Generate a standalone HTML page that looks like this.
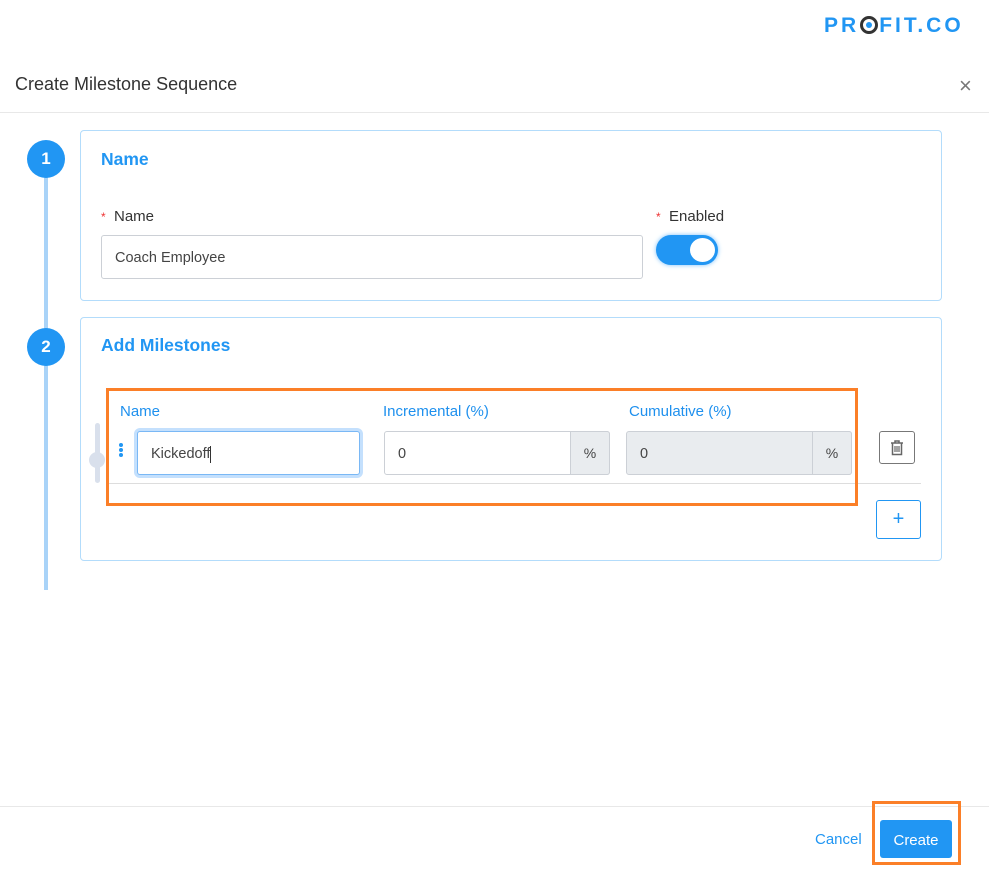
<!DOCTYPE html>
<html><head><meta charset="utf-8"><style>
*{box-sizing:border-box;margin:0;padding:0}
body{width:989px;height:870px;background:#fff;font-family:"Liberation Sans",sans-serif;position:relative;overflow:hidden;color:#333}
.a{position:absolute}
.blue{color:#2196f3}
.inp{position:absolute;border:1px solid #ccd0d6;border-radius:3px;background:#fff;font-size:14.5px;color:#444;padding-left:13px;padding-top:2px;display:flex;align-items:center}
.lbl{position:absolute;font-size:15px;color:#1e90ee}
.add{position:absolute;top:-1px;bottom:-1px;right:-1px;width:40px;border:1px solid #ccd0d6;border-radius:0 3px 3px 0;background:#e9ecef;display:flex;align-items:center;justify-content:center;font-size:14px;color:#444}
</style></head><body>
<div class="a blue" style="left:824px;top:14px;font-size:21px;font-weight:bold;letter-spacing:3px;">PR<span style="display:inline-block;width:18px;height:18px;border:3px solid #333;border-radius:50%;vertical-align:-2px;position:relative;margin:0 1px"><span style="position:absolute;left:3px;top:3px;width:6px;height:6px;background:#2196f3;border-radius:50%"></span></span>FIT.CO</div>
<div class="a" style="left:15px;top:74px;font-size:18px;color:#333">Create Milestone Sequence</div>
<div class="a" style="left:959px;top:73px;font-size:22px;color:#777">×</div>
<div class="a" style="left:0;top:112px;width:989px;height:1px;background:#e8e8e8"></div>

<div class="a" style="left:44px;top:170px;width:4px;height:420px;background:#a9d3f8"></div>
<div class="a" style="left:27px;top:140px;width:38px;height:38px;border-radius:50%;background:#2196f3;color:#fff;font-weight:bold;font-size:17px;display:flex;align-items:center;justify-content:center">1</div>
<div class="a" style="left:27px;top:328px;width:38px;height:38px;border-radius:50%;background:#2196f3;color:#fff;font-weight:bold;font-size:17px;display:flex;align-items:center;justify-content:center">2</div>

<div class="a" style="left:80px;top:130px;width:862px;height:171px;border:1px solid #b3dcfb;border-radius:4px"></div>
<div class="a blue" style="left:101px;top:149px;font-size:17.5px;font-weight:bold">Name</div>
<div class="a" style="left:101px;top:208px;font-size:15px"><span style="color:#e33;font-size:12px">*</span>&nbsp; Name</div>
<div class="inp" style="left:101px;top:235px;width:542px;height:44px">Coach Employee</div>
<div class="a" style="left:656px;top:208px;font-size:15px"><span style="color:#e33;font-size:12px">*</span>&nbsp; Enabled</div>
<div class="a" style="left:656px;top:235px;width:62px;height:30px;border-radius:15px;background:#2196f3;box-shadow:0 0 5px #7cc0fa"><div style="position:absolute;right:3px;top:3px;width:25px;height:24px;border-radius:50%;background:#fff"></div></div>

<div class="a" style="left:80px;top:317px;width:862px;height:244px;border:1px solid #b3dcfb;border-radius:4px"></div>
<div class="a blue" style="left:101px;top:335px;font-size:17.5px;font-weight:bold">Add Milestones</div>

<div class="lbl" style="left:120px;top:403px">Name</div>
<div class="lbl" style="left:383px;top:403px">Incremental (%)</div>
<div class="lbl" style="left:629px;top:403px">Cumulative (%)</div>
<div class="a" style="left:95px;top:423px;width:5px;height:60px;background:#d9e0ec;border-radius:3px"></div>
<div class="a" style="left:89px;top:452px;width:16px;height:16px;background:#d9e0ec;border-radius:50%"></div>
<div class="a" style="left:119px;top:443px;width:4px;height:4px;background:#2196f3;border-radius:50%;box-shadow:0 5px 0 #2196f3,0 10px 0 #2196f3"></div>
<div class="inp" style="left:137px;top:431px;width:223px;height:44px;border:1px solid #7ab8f5;box-shadow:0 0 0 3px #c4e0fd">Kickedoff<span style="display:inline-block;width:1px;height:17px;background:#333"></span></div>
<div class="inp" style="left:384px;top:431px;width:226px;height:44px">0<div class="add">%</div></div>
<div class="inp" style="left:626px;top:431px;width:226px;height:44px;background:#e9ecef">0<div class="add">%</div></div>
<div class="a" style="left:107px;top:483px;width:814px;height:1px;background:#ddd"></div>
<div class="a" style="left:879px;top:431px;width:36px;height:33px;border:1px solid #777;border-radius:3px;display:flex;align-items:center;justify-content:center">
<svg width="14" height="16" viewBox="0 0 14 16"><path d="M1 3h12M5 3V1h4v2M2.5 3.5v11h9v-11" fill="none" stroke="#666" stroke-width="1.5"/><path d="M5 6v6M7 6v6M9 6v6" stroke="#666" stroke-width="1.2"/></svg></div>
<div class="a" style="left:876px;top:500px;width:45px;height:39px;border:1px solid #2196f3;border-radius:3px;color:#2196f3;font-size:20px;display:flex;align-items:center;justify-content:center">+</div>
<div class="a" style="left:106px;top:388px;width:752px;height:118px;border:3px solid #fb7f28"></div>

<div class="a" style="left:0;top:806px;width:989px;height:1px;background:#e8e8e8"></div>
<div class="a blue" style="left:815px;top:831px;font-size:15px">Cancel</div>
<div class="a" style="left:880px;top:820px;width:72px;height:38px;background:#2196f3;border-radius:3px;color:#fff;font-size:15px;padding-top:2px;display:flex;align-items:center;justify-content:center">Create</div>
<div class="a" style="left:872px;top:801px;width:89px;height:64px;border:3px solid #fb7f28"></div>
</body></html>
